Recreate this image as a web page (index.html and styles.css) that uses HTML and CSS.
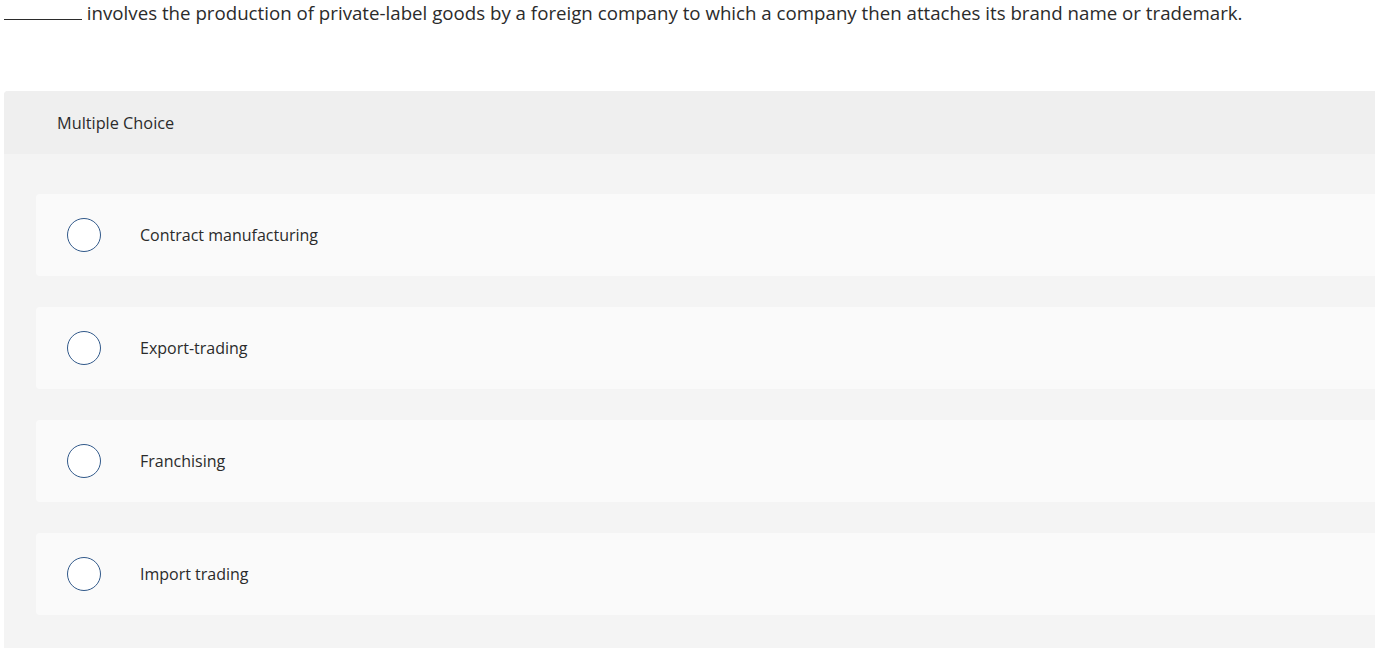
FILE: index.html
```html
<!DOCTYPE html>
<html>
<head>
<meta charset="utf-8">
<link rel="stylesheet" href="styles.css">
</head>
<body>
<p class="question"><span class="blank"></span> involves the production of private-label goods by a foreign company to which a company then attaches its brand name or trademark.</p>
<section class="panel">
  <div class="panel-head">Multiple Choice</div>
  <div class="options">
    <label class="option"><span class="radio"></span><span class="label">Contract manufacturing</span></label>
    <label class="option"><span class="radio"></span><span class="label">Export-trading</span></label>
    <label class="option"><span class="radio"></span><span class="label">Franchising</span></label>
    <label class="option"><span class="radio"></span><span class="label">Import trading</span></label>
  </div>
</section>
</body>
</html>
```

FILE: styles.css
```css
html, body {
  margin: 0;
  padding: 0;
  background: #ffffff;
  overflow: hidden;
}
body {
  font-family: "Open Sans", Lato, sans-serif;
  color: #2b2b2b;
}
.question {
  margin: 0;
  padding: 2px 0 0 4px;
  font-size: 18.7px;
  line-height: 22px;
  height: 91px;
  box-sizing: border-box;
}
.blank {
  display: inline-block;
  width: 78px;
  border-bottom: 1px solid #2b2b2b;
  vertical-align: baseline;
}
.panel {
  margin-left: 4px;
  background: #f4f4f4;
  border-top-left-radius: 4px;
  overflow: hidden;
  height: 570px;
}
.panel-head {
  background: #efefef;
  height: 63px;
  padding-left: 53px;
  display: flex;
  align-items: center;
  font-size: 16.3px;
}
.options {
  display: flex;
  flex-direction: column;
  gap: 31px;
  padding: 40px 0 0 32px;
}
.option {
  display: flex;
  align-items: center;
  height: 82px;
  background: #fafafa;
  border-radius: 4px 0 0 4px;
  font-size: 16px;
}
.radio {
  width: 32px;
  height: 32px;
  border: 1.5px solid #31598a;
  border-radius: 50%;
  background: #ffffff;
  margin-left: 31px;
  flex: none;
}
.label {
  margin-left: 39px;
}
```
